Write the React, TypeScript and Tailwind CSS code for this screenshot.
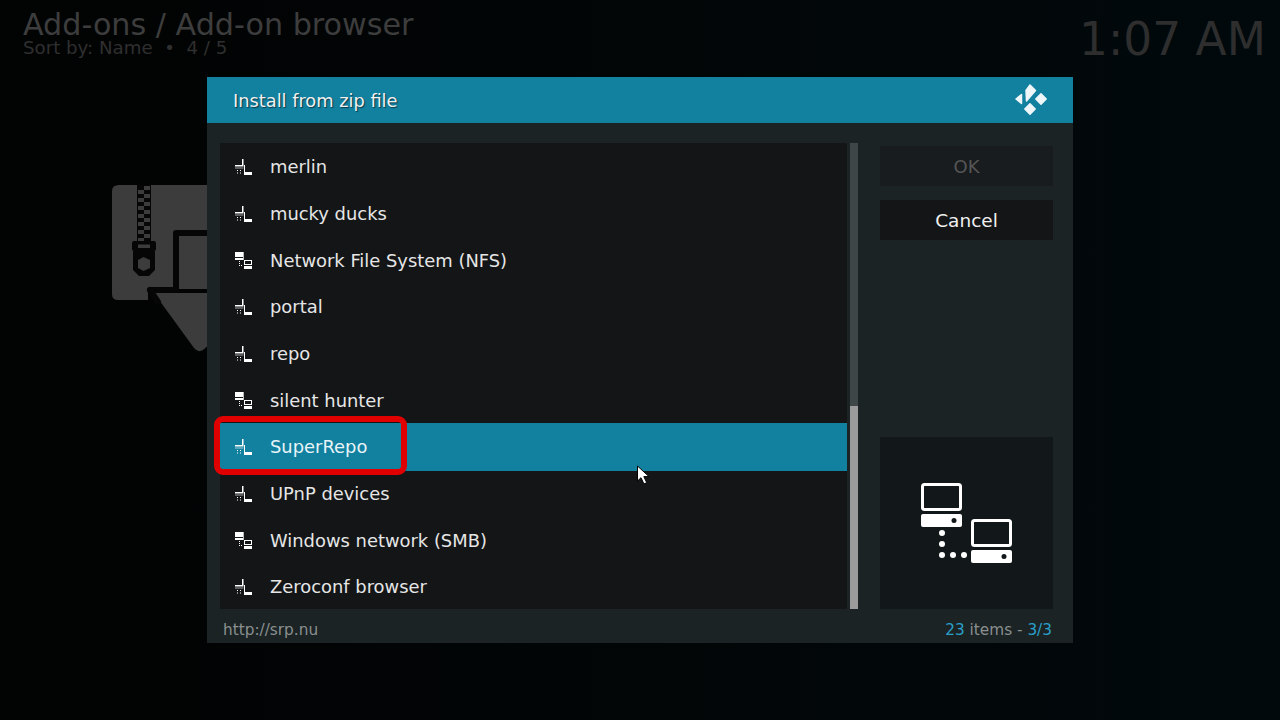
import * as React from 'react'

const rows = [
  { name: 'merlin', icon: 'share' },
  { name: 'mucky ducks', icon: 'share' },
  { name: 'Network File System (NFS)', icon: 'net' },
  { name: 'portal', icon: 'share' },
  { name: 'repo', icon: 'share' },
  { name: 'silent hunter', icon: 'net' },
  { name: 'SuperRepo', icon: 'share', selected: true },
  { name: 'UPnP devices', icon: 'share' },
  { name: 'Windows network (SMB)', icon: 'net' },
  { name: 'Zeroconf browser', icon: 'share' },
]

/* 작은 네트워크 아이콘 */
function RowIcon({ kind }: { kind: string }) {
  if (kind === 'net') {
    return (
      <svg width="20" height="20" viewBox="0 0 20 20" fill="#fff" className="shrink-0">
        <rect x="2" y="2" width="8" height="5" />
        <rect x="2" y="8" width="8" height="2" />
        <rect x="10" y="2" width="1" height="8" opacity="0.7" />
        <rect x="11" y="10" width="8" height="1" />
        <rect x="11" y="10" width="1" height="5" />
        <rect x="18" y="10" width="1" height="5" />
        <rect x="11" y="14" width="8" height="1" />
        <rect x="11" y="16" width="8" height="3" />
        <rect x="6" y="11" width="1" height="1" />
        <rect x="6" y="13" width="1" height="1" />
        <rect x="6" y="15" width="1" height="1" />
        <rect x="8" y="15" width="1" height="1" />
      </svg>
    )
  }
  return (
    <svg width="20" height="20" viewBox="0 0 20 20" fill="#fff" className="shrink-0">
      <rect x="9" y="2" width="1.5" height="6" />
      <rect x="2" y="8" width="8.5" height="1.5" />
      <rect x="2" y="10.5" width="8.5" height="1" opacity="0.6" />
      <rect x="11" y="8" width="1" height="7" />
      <rect x="11" y="15" width="8" height="3" />
      <rect x="4" y="13" width="1" height="1" />
      <rect x="4" y="15.5" width="1" height="1" />
      <rect x="7" y="13" width="1" height="1" />
      <rect x="7" y="15.5" width="1" height="1" />
    </svg>
  )
}

function KodiLogo() {
  return (
    <svg
      width="34"
      height="34"
      viewBox="0 0 34 34"
      fill="#eef6f9"
      stroke="#eef6f9"
      strokeWidth="1.5"
      strokeLinejoin="round"
    >
      <path d="M16 2 L21.5 7.5 L12.5 18 L12 7.5 Z" />
      <path d="M7.5 11.5 V20.5 L2 16 Z" />
      <path d="M27 10.8 L32.2 16 L27 21.2 L21.8 16 Z" />
      <path d="M16 20.8 L21.2 26 L16 31.2 L10.8 26 Z" />
    </svg>
  )
}

function ZipIcon() {
  const teeth = Array.from({ length: 7 })
  return (
    <svg width="100" height="170" viewBox="0 0 100 170" className="absolute left-[112px] top-[184px]">
      <path d="M7 1 H100 V105 H36 V116 H6 Q0 116 0 110 V7 Q0 1 7 1 Z" fill="#3c3c3c" />
      <path d="M42 109 H100 V158 L91 166 Q86 169 82 164 Z" fill="#3c3c3c" />
      {/* 지퍼 */}
      <rect x="25" y="1" width="14" height="56" fill="#060606" />
      {teeth.map((_, i) => (
        <g key={i} fill="#3c3c3c">
          <rect x="32" y={2 + i * 8} width="6" height="4" />
          <rect x="26" y={6 + i * 8} width="6" height="4" />
        </g>
      ))}
      <rect x="20" y="57" width="24" height="10" rx="2" fill="#060606" />
      <rect x="26" y="60.5" width="12" height="3.5" fill="#3c3c3c" />
      <path d="M21 67 H43 V86 L37 92 H27 L21 86 Z" fill="#060606" />
      <path d="M26 76 L31.5 73 L38 76 V84 L31.5 87 L26 84 Z" fill="#3c3c3c" />
      {/* 화살표 윤곽 */}
      <path d="M100 49 H64 V106 H38" fill="none" stroke="#060606" strokeWidth="6" strokeLinecap="round" strokeLinejoin="round" />
      <path d="M38 106 L46 118" fill="none" stroke="#060606" strokeWidth="6" strokeLinecap="round" />
    </svg>
  )
}

function NetworkArt() {
  return (
    <svg width="92" height="80" viewBox="0 0 92 80" fill="#fff">
      <rect x="1.5" y="1.5" width="38" height="25" rx="2" fill="none" stroke="#fff" strokeWidth="3" />
      <rect x="0" y="31" width="41" height="13" rx="2" />
      <circle cx="33" cy="37.5" r="2.5" fill="#121819" />
      <rect x="51.5" y="37.5" width="38" height="25" rx="2" fill="none" stroke="#fff" strokeWidth="3" />
      <rect x="50" y="67" width="41" height="13" rx="2" />
      <circle cx="83" cy="73.5" r="2.5" fill="#121819" />
      <circle cx="21" cy="50" r="3" />
      <circle cx="21" cy="61" r="3" />
      <circle cx="21" cy="72" r="3" />
      <circle cx="32" cy="72" r="3" />
      <circle cx="43" cy="72" r="3" />
    </svg>
  )
}

export default function App() {
  return (
    <div
      className="relative h-[720px] w-[1280px] overflow-hidden bg-gradient-to-r from-[#020303] to-[#01090c] text-white"
      style={{ fontFamily: '"DejaVu Sans", sans-serif' }}
    >
      {/* 상단 헤더 */}
      <header className="flex items-start justify-between pl-[23px] pr-[14px] pt-[9px] text-[#3d3d3d]">
        <div>
          <div className="text-[30.2px] leading-[32px]">Add-ons / Add-on browser</div>
          <div className="text-[18.2px] leading-[14px] text-[#2f2f2f]">
            Sort by: Name&nbsp; •&nbsp; 4 / 5
          </div>
        </div>
        <div className="pt-[5px] text-[45.5px] leading-[52px] text-[#2e2e2e]">1:07 AM</div>
      </header>

      <ZipIcon />

      {/* 다이얼로그 */}
      <div className="absolute left-[207px] top-[77px] flex h-[566px] w-[866px] flex-col bg-[#1b2324]">
        <div className="flex h-[46px] items-center justify-between bg-[#12809f] pl-[26px] pr-[25px]">
          <span className="pt-[2px] text-[17.8px] text-[#f0f0f0] [text-shadow:1px_1px_1px_#0a3a4a]">Install from zip file</span>
          <KodiLogo />
        </div>

        <div className="flex flex-1 pl-[13px] pr-[20px] pt-[20px]">
          <ul className="flex h-[466px] w-[627px] flex-col bg-[#131517]">
            {rows.map((row) => (
              <li key={row.name} className="h-[46.67px] shrink-0">
                <div
                  className={
                    row.selected
                      ? 'flex h-[48px] items-center gap-[17px] bg-[#12809f] pl-[13px] text-[17.9px] text-[#e8f4f8]'
                      : 'flex h-[48px] items-center gap-[17px] pl-[13px] text-[17.9px] text-[#e6e6e6]'
                  }
                >
                  <RowIcon kind={row.icon} />
                  <span className="pt-[1.7px]">{row.name}</span>
                </div>
              </li>
            ))}
          </ul>

          {/* 스크롤바 */}
          <div className="ml-[3px] flex h-[466px] w-[8px] flex-col justify-end bg-[#3e4647]">
            <div className="h-[203px] bg-[#9b9b9b]" />
          </div>

          <div className="ml-[22px] flex h-[466px] flex-1 flex-col">
            <div className="mt-[3px] flex h-[40px] items-center justify-center bg-[#181c1e] text-[18px] font-medium text-[#555]">
              OK
            </div>
            <div className="mt-[14px] flex h-[40px] items-center justify-center bg-[#131517] pt-[1px] text-[18.5px] text-[#f0f0f0]">
              Cancel
            </div>
            <div className="mt-auto flex h-[172px] items-center justify-center bg-[#121819]">
              <NetworkArt />
            </div>
          </div>
        </div>

        <div className="flex h-[34px] items-center justify-between pl-[16px] pr-[21px] pt-[9px] text-[15.3px] text-[#8a8f90]">
          <span>http://srp.nu</span>
          <span>
            <span className="text-[#2a9fc9]">23</span> items - <span className="text-[#2a9fc9]">3/3</span>
          </span>
        </div>
      </div>

      {/* 빨간 강조 표시 */}
      <div className="absolute left-[214px] top-[416px] h-[59px] w-[193px] rounded-[9px] border-[6px] border-[#e00000]" />

      {/* 마우스 커서 */}
      <svg width="15" height="21" viewBox="0 0 15 21" className="absolute left-[636px] top-[465px]">
        <path d="M1.5 1 V16 L5 12.7 L8 19 L10.7 17.6 L7.8 11.6 H13 Z" fill="#fff" stroke="#000" strokeWidth="1" />
      </svg>
    </div>
  )
}
